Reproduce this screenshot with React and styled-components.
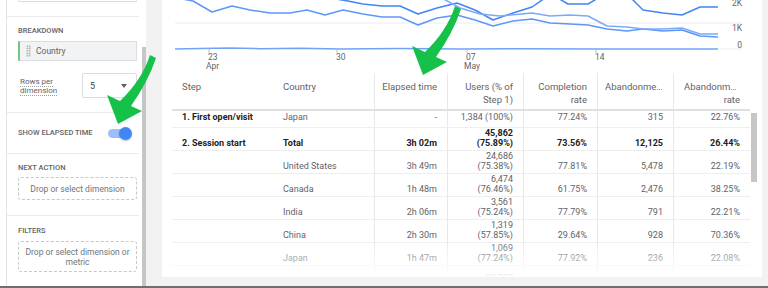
import React from "react";
import styled, { createGlobalStyle } from "styled-components";

const GlobalStyle = createGlobalStyle`
  html, body { margin: 0; padding: 0; }
  body {
    width: 768px;
    height: 288px;
    overflow: hidden;
    background: #f2f2f2;
    font-family: Roboto, "Liberation Sans", sans-serif;
  }
`;

const Frame = styled.div`
  position: relative;
  width: 768px;
  height: 288px;
  display: flex;
  flex-direction: column;
`;

const Body = styled.div`
  flex: 1;
  display: flex;
  min-height: 0;
`;

const BottomEdge = styled.div`
  height: 2px;
  background: #6e6e6e;
`;

/* ---------- sidebar ---------- */

const Sidebar = styled.aside`
  width: 146px;
  background: #fff;
  display: flex;
`;

const Panel = styled.div`
  margin-left: 6px;
  width: 132px;
  border-left: 1px solid #e3e3e3;
  display: flex;
  flex-direction: column;
`;

const SideScroll = styled.div`
  margin-left: 3px;
  width: 4px;
  padding-top: 47px;
  display: flex;
`;

const Thumb = styled.div`
  flex: 1;
  background: #c6c6c6;
`;

const Section = styled.div`
  border-bottom: 1px solid #e8eaed;
  padding: ${(p) => p.$pad || "9px 2px 13px 11px"};
  height: ${(p) => (p.$h ? `${p.$h}px` : "auto")};
  box-sizing: border-box;
  display: flex;
  flex-direction: ${(p) => (p.$row ? "row" : "column")};
  align-items: ${(p) => (p.$row ? "center" : "stretch")};
  justify-content: ${(p) => (p.$row ? "space-between" : "flex-start")};
  gap: ${(p) => p.$gap || 5}px;
`;

const LastSection = styled(Section)`
  border-bottom: none;
  flex: 1;
`;

const StubBox = styled.div`
  height: 1px;
  border: 1px solid #dadce0;
  border-top: none;
  border-radius: 0 0 3px 3px;
`;

const Label = styled.div`
  font-size: 7.5px;
  line-height: 10px;
  font-weight: 500;
  color: #5f6368;
  text-transform: uppercase;
  white-space: nowrap;
`;

const Chip = styled.div`
  height: 20px;
  box-sizing: border-box;
  background: #f1f3f4;
  border: 1px solid #dadce0;
  border-left: 2px solid #72c97e;
  display: flex;
  align-items: center;
  gap: 5px;
  padding-left: 6px;
  font-size: 8.5px;
  color: #5f6368;
`;

const Grip = styled.span`
  width: 5px;
  height: 12px;
  background-image: radial-gradient(circle, #b5b5b5 0.75px, transparent 1px);
  background-size: 2.5px 2.4px;
`;

const RowsLine = styled.div`
  margin-top: 7px;
  display: flex;
  align-items: center;
  justify-content: space-between;
`;

const RowsText = styled.span`
  padding-left: 2px;
  font-size: 8px;
  line-height: 9px;
  color: #5f6368;
  text-decoration: underline dotted #9aa0a6;
  text-underline-offset: 2px;
`;

const Select = styled.div`
  width: 55px;
  height: 25px;
  box-sizing: border-box;
  border: 1px solid #dadce0;
  border-radius: 2px;
  display: flex;
  align-items: center;
  justify-content: space-between;
  padding: 0 9px 0 7px;
  font-size: 9px;
  color: #3c4043;
`;

const Caret = styled.span`
  width: 0;
  height: 0;
  border-left: 3.5px solid transparent;
  border-right: 3.5px solid transparent;
  border-top: 4px solid #5f6368;
`;

const Toggle = styled.div`
  position: relative;
  width: 21px;
  height: 9px;
  margin-right: 8px;
  border-radius: 5px;
  background: #9dbff9;
`;

const Knob = styled.span`
  position: absolute;
  right: -3px;
  top: -2px;
  width: 13px;
  height: 13px;
  border-radius: 50%;
  background: #4285f4;
  box-shadow: 0 1px 2px rgba(0, 0, 0, 0.25);
`;

const DropBox = styled.div`
  height: ${(p) => p.$h}px;
  box-sizing: border-box;
  border: 1px dashed #c8c8c8;
  border-radius: 3px;
  display: flex;
  align-items: center;
  justify-content: center;
  text-align: center;
  padding: 0 4px;
  font-size: 8.5px;
  line-height: 10px;
  color: #70757a;
`;

/* ---------- main card ---------- */

const Main = styled.main`
  flex: 1;
  display: flex;
  padding: 0 6px 9px 16px;
  background: #f2f2f2;
`;

const Card = styled.section`
  position: relative;
  flex: 1;
  background: #fff;
  overflow: hidden;
  display: flex;
  padding: 0 5px 0 10px;
`;

const Content = styled.div`
  width: 578px;
  display: flex;
  flex-direction: column;
`;

const CardScroll = styled.div`
  margin-left: 1px;
  width: 6px;
  padding-top: 113px;
`;

const CardThumb = styled.div`
  height: 69px;
  background: #c6c6c6;
`;

const Fade = styled.div`
  position: absolute;
  left: 0;
  right: 0;
  bottom: 0;
  height: 38px;
  background: linear-gradient(rgba(255, 255, 255, 0), rgba(255, 255, 255, 0.92));
`;

const Chart = styled.svg`
  display: block;
  flex: none;
`;

const cols = "104px 98px 73px 76px 74px 76px 77px";

const Row = styled.div`
  display: grid;
  grid-template-columns: ${cols};
  height: ${(p) => p.$h}px;
  box-sizing: border-box;
  border-bottom: ${(p) => (p.$head ? "2px solid #e0e0e0" : "1px solid #eeeeee")};
  flex: none;
`;

const Cell = styled.div`
  display: flex;
  flex-direction: column;
  justify-content: ${(p) => (p.$head ? "flex-start" : "flex-end")};
  align-items: ${(p) => (p.$right ? "flex-end" : "flex-start")};
  padding: ${(p) => (p.$head ? "7px 10px 0" : "0 10px 5px")};
  padding-left: ${(p) => (p.$first ? "10px" : p.$right ? "10px" : "7px")};
  border-left: ${(p) => (p.$line ? "1px solid #e8e8e8" : "none")};
  font-size: ${(p) => (p.$head ? "9.5px" : "9px")};
  line-height: ${(p) => (p.$head ? "13px" : "10px")};
  font-weight: ${(p) => (p.$bold ? 700 : 400)};
  color: ${(p) => (p.$bold ? "#202124" : "#5f6368")};
  min-width: 0;
  white-space: nowrap;
`;

const Trunc = styled.span`
  max-width: 100%;
  overflow: hidden;
  text-overflow: ellipsis;
  white-space: nowrap;
`;

const Arrows = styled.svg`
  position: absolute;
  left: 0;
  top: 0;
  pointer-events: none;
`;

const series = [
  {
    c: "#4285f4",
    p: "330,-2 348,1 363,4 382,6 400,6 418,14 437,8 457,3 475,10 493,20 513,13 532,7 545,-2 556,-3 568,4 588,4 600,-3 630,-3 643,10 663,13 682,15 700,7 718,7",
  },
  {
    c: "#5e97f6",
    p: "172,-3 193,1 212,12 232,6 250,10 270,13 290,13 307,10 325,15 343,10 363,14 382,17 400,17 418,25 437,18 457,15 475,20 493,26 513,21 532,19 550,23 570,24 588,25 607,29 627,31 643,29 663,31 682,30 700,36 718,37",
  },
  {
    c: "#7baaf7",
    p: "440,-3 460,8 480,14 500,16 532,13 550,16 570,15 588,16 607,26 627,27 643,29 663,29 682,28 700,34 718,34",
  },
  {
    c: "#6fa3f7",
    p: "175,49 200,48.5 230,48 260,48.7 300,48.3 340,49 400,48.6 460,49 520,48.7 600,49 718,49",
  },
];

const xLabels = [
  { x: 208, a: "23", b: "Apr" },
  { x: 336, a: "30" },
  { x: 466, a: "07", b: "May" },
  { x: 595, a: "14" },
];

const rows = [
  { h: 17, step: "1. First open/visit", country: "Japan", time: "-", users: ["1,384 (100%)"], comp: "77.24%", ab: "315", rate: "22.76%" },
  { h: 23, step: "2. Session start", country: "Total", time: "3h 02m", users: ["45,862", "(75.89%)"], comp: "73.56%", ab: "12,125", rate: "26.44%", bold: true },
  { h: 23, country: "United States", time: "3h 49m", users: ["24,686", "(75.38%)"], comp: "77.81%", ab: "5,478", rate: "22.19%" },
  { h: 23, country: "Canada", time: "1h 48m", users: ["6,474", "(76.46%)"], comp: "61.75%", ab: "2,476", rate: "38.25%" },
  { h: 23, country: "India", time: "2h 06m", users: ["3,561", "(75.24%)"], comp: "77.79%", ab: "791", rate: "22.21%" },
  { h: 23, country: "China", time: "2h 30m", users: ["1,319", "(57.85%)"], comp: "29.64%", ab: "928", rate: "70.36%" },
  { h: 23, country: "Japan", time: "1h 47m", users: ["1,069", "(77.24%)"], comp: "77.92%", ab: "236", rate: "22.08%" },
  { h: 23, country: "", time: "", users: ["33,737", ""], comp: "", ab: "", rate: "" },
];

function GreenArrow({ dx = 0, dy = 0 }) {
  return (
    <path
      transform={`translate(${dx} ${dy})`}
      fill="#16c14a"
      d="M455,6 Q447,31 425,52 L412,46 L423,75 L447,62 L436,57 Q453,33 461,9 Z"
    />
  );
}

export default function App() {
  return (
    <>
      <GlobalStyle />
      <Frame>
        <Body>
          <Sidebar>
            <Panel>
              <Section $h={17} $pad="0 2px 0 11px">
                <StubBox />
              </Section>
              <Section $h={96}>
                <Label>Breakdown</Label>
                <Chip>
                  <Grip />
                  Country
                </Chip>
                <RowsLine>
                  <RowsText>
                    Rows per
                    <br />
                    dimension
                  </RowsText>
                  <Select>
                    5
                    <Caret />
                  </Select>
                </RowsLine>
              </Section>
              <Section $h={41} $row $pad="0 2px 0 11px">
                <Label>Show elapsed time</Label>
                <Toggle>
                  <Knob />
                </Toggle>
              </Section>
              <Section $h={62} $gap={4}>
                <Label>Next action</Label>
                <DropBox $h={23}>Drop or select dimension</DropBox>
              </Section>
              <LastSection $pad="10px 2px 0 11px">
                <Label>Filters</Label>
                <DropBox $h={31}>
                  Drop or select dimension or
                  <br />
                  metric
                </DropBox>
              </LastSection>
            </Panel>
            <SideScroll>
              <Thumb />
            </SideScroll>
          </Sidebar>

          <Main>
            <Card>
              <Content>
                <Chart width="578" height="73" viewBox="172 0 578 73">
                  <line x1="175" y1="23" x2="742" y2="23" stroke="#ececec" strokeWidth="1" />
                  <line x1="720" y1="49" x2="742" y2="49" stroke="#ececec" strokeWidth="1" />
                  {series.map((s, i) => (
                    <polyline key={i} points={s.p} fill="none" stroke={s.c} strokeWidth="1.5" strokeLinejoin="round" />
                  ))}
                  {xLabels.map((l) => (
                    <g key={l.a} fontSize="8.5" fill="#5f6368" fontFamily="Roboto, sans-serif">
                      <line x1={l.x + 1} y1="49" x2={l.x + 1} y2="53" stroke="#b0b0b0" strokeWidth="0.8" />
                      <text x={l.x} y="60">{l.a}</text>
                      {l.b && <text x={l.x - 2} y="68.5">{l.b}</text>}
                    </g>
                  ))}
                  <g fontSize="8.5" fill="#5f6368" fontFamily="Roboto, sans-serif" textAnchor="end">
                    <text x="742" y="6">2K</text>
                    <text x="742" y="31">1K</text>
                    <text x="742" y="47.5">0</text>
                  </g>
                </Chart>

                <Row $h={38} $head>
                  <Cell $head $first>Step</Cell>
                  <Cell $head>Country</Cell>
                  <Cell $head $right $line>Elapsed time</Cell>
                  <Cell $head $right $line>
                    <span>Users (% of</span>
                    <span>Step 1)</span>
                  </Cell>
                  <Cell $head $right $line>
                    <span>Completion</span>
                    <span>rate</span>
                  </Cell>
                  <Cell $head $line>
                    <Trunc>Abandonment</Trunc>
                  </Cell>
                  <Cell $head $right $line>
                    <Trunc>Abandonment</Trunc>
                    <span>rate</span>
                  </Cell>
                </Row>

                {rows.map((r, i) => (
                  <Row key={i} $h={r.h}>
                    <Cell $first $bold>{r.step}</Cell>
                    <Cell $bold={r.bold}>{r.country}</Cell>
                    <Cell $right $line $bold={r.bold}>{r.time}</Cell>
                    <Cell $right $line $bold={r.bold}>
                      {r.users.map((u, j) => (
                        <span key={j}>{u}</span>
                      ))}
                    </Cell>
                    <Cell $right $line $bold={r.bold}>{r.comp}</Cell>
                    <Cell $right $line $bold={r.bold}>{r.ab}</Cell>
                    <Cell $right $line $bold={r.bold}>{r.rate}</Cell>
                  </Row>
                ))}
              </Content>
              <CardScroll>
                <CardThumb />
              </CardScroll>
              <Fade />
            </Card>
          </Main>
        </Body>
        <BottomEdge />

        <Arrows width="768" height="288" viewBox="0 0 768 288">
          <GreenArrow />
          <GreenArrow dx={-305} dy={49} />
        </Arrows>
      </Frame>
    </>
  );
}
